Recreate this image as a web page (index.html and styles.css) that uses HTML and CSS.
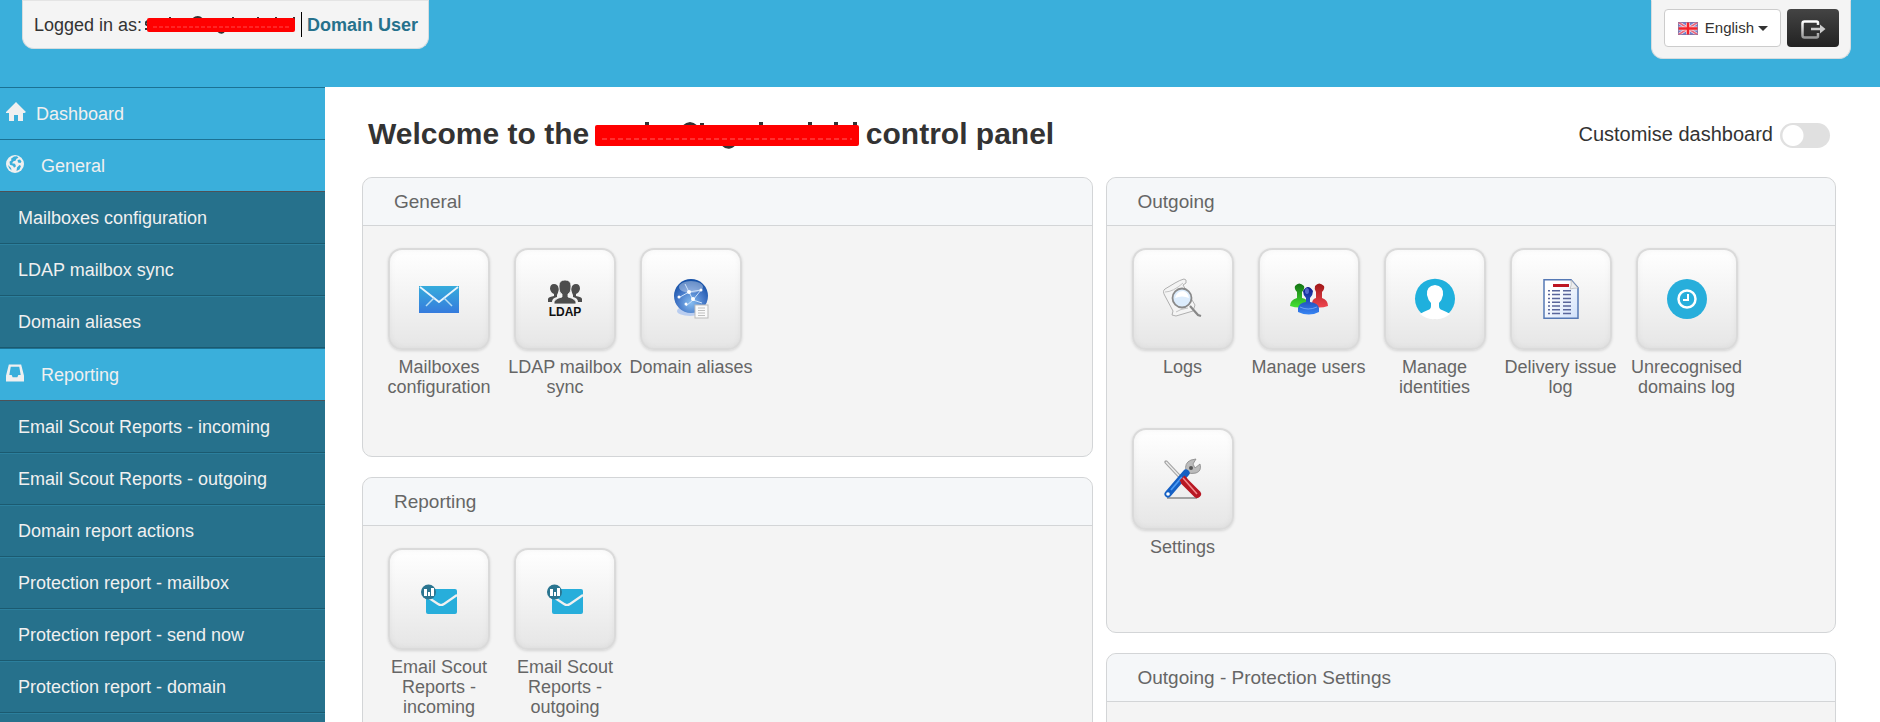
FILE: index.html
```html
<!DOCTYPE html>
<html lang="en">
<head>
<meta charset="utf-8">
<title>Domain control panel</title>
<link rel="stylesheet" href="styles.css">
</head>
<body>
<header class="topbar">
  <div class="tab user-tab">
    <span>Logged in as:</span>
    <svg class="mask-small" width="152" height="20" viewBox="0 0 152 20" role="img" aria-label="Hidden user name">
      <g fill="none" stroke="#333" stroke-width="2"><path d="M5 7c-4-2-6 2-3 3s4 4 0 4H0M25 2v4M48 4q5-4 9 0M62 3v3M88 2v4M113 2v4M131 2v4M149 2v4M73 16q4 4 7-1"/></g>
      <rect x="2" y="3" width="148" height="14" rx="2" fill="#f00"/>
      <path d="M8 12h138" stroke="#ff6a6a" stroke-dasharray="4 2" opacity=".7"/>
    </svg>
    <span class="separator"></span>
    <a class="role" href="#">Domain User</a>
  </div>
  <div class="tab tools-tab">
    <button class="language" type="button">
      <svg width="20" height="13" viewBox="0 0 20 13"><rect width="20" height="13" fill="#6c83d0"/><path d="M0 0l20 13M20 0L0 13" stroke="#f5dfe4" stroke-width="3"/><path d="M0 0l20 13M20 0L0 13" stroke="#e8637a" stroke-width="1.500"/><path d="M10 0v13M0 6.500h20" stroke="#fbd5d5" stroke-width="4"/><path d="M10 0v13M0 6.500h20" stroke="#f3232b" stroke-width="2.500"/><rect x=".5" y=".5" width="19" height="12" fill="none" stroke="#8d6d9c" opacity=".7"/></svg>
      <span>English</span>
      <svg class="caret" width="10" height="5" viewBox="0 0 10 5"><path d="M0 0h10L5 5z" fill="#333"/></svg>
    </button>
    <button class="logout" type="button" aria-label="Log out">
      <svg width="25" height="19" viewBox="0 0 25 19"><defs><linearGradient id="lg" x2="0" y2="1"><stop stop-color="#fff"/><stop offset="1" stop-color="#999"/></linearGradient></defs><path d="M17 5V3q0-1.500-1.500-1.500H3.500Q1.500 1.500 1.500 3.500v12q0 2 2 2h12q1.500 0 1.500-1.500v-3" fill="none" stroke="url(#lg)" stroke-width="2.500"/><path d="M10 7.700h9V4.500L24.500 9 19 13.500v-3.200h-9z" fill="#ccc"/></svg>
    </button>
  </div>
</header>
<div class="layout">
  <nav class="sidebar">
    <a class="head first" href="#"><svg width="20" height="19" viewBox="0 0 20 19"><path d="M10 0l10 10-1.500 1H17v8h-5v-6H8v6H3v-8H0L0 10z" fill="#f0f0f0"/></svg><span>Dashboard</span></a>
    <a class="head group" href="#"><svg width="18" height="18" viewBox="0 0 18 18"><circle cx="9" cy="9" r="9" fill="#f0f0f0"/><path d="M8 1.500l3-.3 1.500 1.500-2 1-1 2-2 .5-1.500 2 3 .5 1 2.500-2 1.500-1-2-3-1-.5-3 2-1.500-.5-1.500zM11.500 5l2.500-.5 1.500 2-1 1.500-2.500-.5zM13.500 10l1.500 1-1.500 3.500-3 1.500.5-3.500zM2 10l3 3 .5 2.500Q2.500 13.500 2 10z" fill="#3aafdb"/></svg><span>General</span></a>
    <a class="item" href="#">Mailboxes configuration</a>
    <a class="item" href="#">LDAP mailbox sync</a>
    <a class="item" href="#">Domain aliases</a>
    <a class="head group" href="#"><svg width="18" height="18" viewBox="0 0 19 18"><path fill-rule="evenodd" d="M3 0h13l3 12v6H0v-6zM5 2.500L3.500 11H6l1 2.500h5L13 11h2.500L14 2.500z" fill="#f0f0f0"/></svg><span>Reporting</span></a>
    <a class="item" href="#">Email Scout Reports - incoming</a>
    <a class="item" href="#">Email Scout Reports - outgoing</a>
    <a class="item" href="#">Domain report actions</a>
    <a class="item" href="#">Protection report - mailbox</a>
    <a class="item" href="#">Protection report - send now</a>
    <a class="item" href="#">Protection report - domain</a>
    <a class="item" href="#" aria-label="More"></a>
  </nav>
  <main class="content">
    <div class="title-row">
      <h1>Welcome to the
        <svg class="mask-large" width="264" height="30" viewBox="0 0 264 30" role="img" aria-label="Hidden name">
          <path d="M52 1v6M89 6q6-6 12 0M107 2v5M166 1v6M215 1v6M241 1v6M260 1v6M128 23q6 6 12-1" fill="none" stroke="#333" stroke-width="4"/>
          <rect y="4" width="264" height="21" rx="2" fill="#f00"/><path d="M7 18h250" stroke="#ff6060" stroke-dasharray="5 3"/>
        </svg>
        control panel</h1>
      <label class="customise"><span>Customise dashboard</span><input type="checkbox" class="toggle"></label>
    </div>
    <div class="columns">
      <div class="column">
        <section class="panel">
          <h2>General</h2>
          <div class="tiles">
            <a class="tile" href="#"><span class="icon"><svg width="40" height="27" viewBox="0 0 40 27"><defs><linearGradient id="mail" x2="0" y2="1"><stop stop-color="#36acdc"/><stop offset="1" stop-color="#367bdd"/></linearGradient></defs><rect width="40" height="27" fill="url(#mail)"/><path d="M1 1l19 15L39 1" fill="none" stroke="#e9f5fc" stroke-width="1.800"/><path d="M7 20l8-8M25 12l8 8" fill="none" stroke="#b5ddf5" stroke-width="1.500"/></svg></span><span>Mailboxes configuration</span></a>
            <a class="tile" href="#"><span class="icon"><svg width="38" height="38" viewBox="0 0 38 38"><g fill="#4d4d4d"><path d="M2 20q-1-3 6-4v-2Q5 13 4 9q0-5 4-5t5 5q-1 4-2 6v2q-5 1-5 5H2z"/><path d="M36 20q1-3-6-4v-2q3-1 4-5 0-5-4-5t-5 5q1 4 2 6v2q5 1 5 5h4z"/><path d="M8 24q-1-5 8-7v-3q-3-1-3-8 0-6 6-6t6 6q0 7-3 8v3q9 2 8 7z" stroke="#f7f7f7" stroke-width=".8"/></g><text x="19" y="36" text-anchor="middle" class="ldap">LDAP</text></svg></span><span>LDAP mailbox sync</span></a>
            <a class="tile" href="#"><span class="icon"><svg width="36" height="40" viewBox="0 0 36 40"><defs><radialGradient id="globe" cx=".5" cy=".7" r=".65"><stop stop-color="#87bdf0"/><stop offset=".6" stop-color="#4679c8"/><stop offset="1" stop-color="#1852a8"/></radialGradient></defs><ellipse cx="17" cy="32" rx="13" ry="5" fill="#b9cdf0"/><circle cx="18" cy="17" r="17" fill="url(#globe)"/><ellipse cx="18" cy="8" rx="12" ry="6" fill="#fff" opacity=".35"/><path d="M7 18l9-5 4 8 8-10M16 13L12 5M20 21l-7 6M16 13l12-2M20 21l9 3" fill="none" stroke="#cde2fa"/><g fill="#fff"><circle cx="16" cy="13" r="2"/><circle cx="20" cy="20" r="2"/><circle cx="28" cy="11" r="1.500"/><circle cx="6" cy="18" r="1.500"/><circle cx="13" cy="25" r="1.500"/></g><rect x="22" y="26" width="13" height="13" fill="#fafafa" stroke="#bbb"/><path d="M25 29h7M25 31.500h7M25 34h7M25 36.500h7" stroke="#c0c0c0"/></svg></span><span>Domain aliases</span></a>
          </div>
        </section>
        <section class="panel">
          <h2>Reporting</h2>
          <div class="tiles">
            <a class="tile" href="#"><span class="icon"><svg width="36" height="30" viewBox="0 0 36 30"><rect x="5" y="5" width="31" height="25" rx="2" fill="#27aedb"/><path d="M8 14l9 6q3 2 6 0l13-9" fill="none" stroke="#f1f1f1" stroke-width="2.200"/><circle cx="7.500" cy="8" r="7.500" fill="#2b7590"/><path d="M3 5h3v7H3zM7 8h2v4H7zM10 4h3v8h-3z" fill="#fff"/></svg></span><span>Email Scout Reports - incoming</span></a>
            <a class="tile" href="#"><span class="icon"><svg width="36" height="30" viewBox="0 0 36 30"><rect x="5" y="5" width="31" height="25" rx="2" fill="#27aedb"/><path d="M8 14l9 6q3 2 6 0l13-9" fill="none" stroke="#f1f1f1" stroke-width="2.200"/><circle cx="7.500" cy="8" r="7.500" fill="#2b7590"/><path d="M3 5h3v7H3zM7 8h2v4H7zM10 4h3v8h-3z" fill="#fff"/></svg></span><span>Email Scout Reports - outgoing</span></a>
          </div>
        </section>
      </div>
      <div class="column">
        <section class="panel">
          <h2>Outgoing</h2>
          <div class="tiles">
            <a class="tile" href="#"><span class="icon"><svg width="40" height="40" viewBox="0 0 40 40"><path d="M2 10q5-3 10-6t9-4q3 0 2 4l-3 2 12 20-2 6-17 5-4-1 1-4L2 17q-3-5 0-7z" fill="#f4f4f4" stroke="#b0b0b0"/><path d="M2 13q8 0 18-9M13 33q4-3 12-4" fill="none" stroke="#c4c4c4"/><path d="M27 27l8 9 3 1" fill="none" stroke="#888" stroke-width="2.200"/><circle cx="19" cy="19" r="9.500" fill="#dcecfc" stroke="#8a8a8a" stroke-width="1.800"/><path d="M12 19q2-7 8-7 5 1 6 7-7-3-14 0z" fill="#fff"/></svg></span><span>Logs</span></a>
            <a class="tile" href="#"><span class="icon"><svg width="40" height="32" viewBox="0 0 40 32"><defs><linearGradient id="g" x2="0" y2="1"><stop stop-color="#137213"/><stop offset="1" stop-color="#45e334"/></linearGradient><linearGradient id="r" x2="0" y2="1"><stop stop-color="#a01717"/><stop offset="1" stop-color="#ef4650"/></linearGradient><linearGradient id="b" x2="0" y2="1"><stop stop-color="#101a87"/><stop offset="1" stop-color="#3685f4"/></linearGradient></defs><path d="M8 9Q5 6 6 3q4-5 9 0 1 3-2 6v6q6 1 6 6v2q-8 3-18 0 0-6 7-8z" fill="url(#g)"/><path d="M27 9q-2-3-1-6 4-5 9 0 1 3-2 6v6q6 2 6 8-9 3-16 0v-2q0-5 4-6z" fill="url(#r)"/><path d="M17 15q-3-3-3-7 5-8 10 0 0 4-3 7v4q8 1 9 6v4q-10 5-21 0v-4q1-5 8-6z" fill="url(#b)"/><path d="M11 24q8 4 17 0" fill="none" stroke="#9ac3ff" opacity=".6"/><ellipse cx="18" cy="8" rx="2" ry="3" fill="#8ea6ff" opacity=".5"/></svg></span><span>Manage users</span></a>
            <a class="tile" href="#"><span class="icon"><svg width="40" height="40" viewBox="0 0 40 40"><path d="M6 34A20 20 0 1 1 34 34z" fill="#1fb0dd"/><path d="M5 35q3-2 8-4 3-1 3-4v-3q-3-3-4-8-1-9 8-10 9 1 8 10-1 5-4 8v3q0 3 3 4 5 2 8 4-7 6-15 5-8 1-15-5z" fill="#fff"/></svg></span><span>Manage identities</span></a>
            <a class="tile" href="#"><span class="icon"><svg width="36" height="40" viewBox="0 0 36 40"><defs><linearGradient id="sheet" x2="1" y2="1"><stop offset=".3" stop-color="#fff"/><stop offset="1" stop-color="#cfe0fa"/></linearGradient></defs><path d="M1 .8h27l7 8v30.500H1z" fill="url(#sheet)" stroke="#5679b5" stroke-width="1.500"/><path d="M28 1q1 5-1 9 4-1 8-1z" fill="#eee" stroke="#aaa" stroke-width=".6"/><path d="M10 6.500h16" stroke="#bd1622" stroke-width="3"/><path d="M5 11.800h2M5 15.600h2M5 19.400h2M5 23.200h2M5 27h2M5 30.800h2M5 34.600h2M9 11.800h8M9 15.600h8M9 19.400h8M9 23.200h8M9 27h8M9 30.800h8M9 34.600h8M20 11.800h8M20 15.600h8M20 19.400h8M20 23.200h8M20 27h8M20 30.800h8M20 34.600h8" stroke="#5a669b" stroke-width="1.500"/></svg></span><span>Delivery issue log</span></a>
            <a class="tile" href="#"><span class="icon"><svg width="40" height="40" viewBox="0 0 40 40"><circle cx="20" cy="20" r="20" fill="#27aedb"/><circle cx="20" cy="20" r="8.500" fill="none" stroke="#fff" stroke-width="2.500"/><path d="M21 15v6h-5" fill="none" stroke="#fff" stroke-width="2"/></svg></span><span>Unrecognised domains log</span></a>
            <a class="tile" href="#"><span class="icon"><svg width="40" height="40" viewBox="0 0 40 40"><path d="M4 39h30" stroke="#888" stroke-width="1.500"/><path d="M3 3l16 17" stroke="#a5a5a5" stroke-width="3.500" stroke-linecap="round"/><path d="M3 3l16 17" stroke="#eee" stroke-width="1.300"/><path d="M22 16l4-4" stroke="#777" stroke-width="5"/><path d="M23 12q-2-8 5-11l5-1-3 5 2 4 5-4q2 7-4 9-5 2-10-2z" fill="#bbb" stroke="#888" stroke-width=".8"/><circle cx="28" cy="9" r="2" fill="#555"/><path d="M23 14L5 35" stroke="#1560c4" stroke-width="7" stroke-linecap="round"/><path d="M19 18L8 31" stroke="#4d9cf5" stroke-width="1.800"/><circle cx="5" cy="35" r="1.800" fill="#fff"/><path d="M19 19l3 3" stroke="#b81824" stroke-width="7"/><path d="M22 23l12 12" stroke="#b81824" stroke-width="8" stroke-linecap="round"/><path d="M20 19l14 16" stroke="#f38b8e" stroke-width="1.500"/></svg></span><span>Settings</span></a>
          </div>
        </section>
        <section class="panel">
          <h2>Outgoing - Protection Settings</h2>
          <div class="tiles"></div>
        </section>
      </div>
    </div>
  </main>
</div>
</body>
</html>
```
FILE: styles.css
```css
* { box-sizing: border-box; }
html, body { height: 100%; }
body {
  margin: 0;
  overflow: hidden;
  display: flex;
  flex-direction: column;
  background: #fff;
  color: #333;
  font: 18px/20px "Liberation Sans", Arial, sans-serif;
}
a { color: inherit; text-decoration: none; }
button { font: inherit; color: inherit; cursor: pointer; }

.topbar {
  flex: none;
  display: flex;
  justify-content: space-between;
  align-items: flex-start;
  min-height: 87px;
  padding: 0 29px 0 22px;
  background: #3aafdb;
}
.tab {
  display: flex;
  background: #f4f4f4;
  border: 1px solid #d5dcdf;
  border-top-color: #e4e4e4;
  border-radius: 0 0 12px 12px;
}
.user-tab { align-items: center; padding: 11px 10px 11px 11px; }
.mask-small { margin-left: 3px; }
.separator { width: 1px; height: 25px; margin: 0 5px 0 4px; background: #000; }
.role { color: #26718c; font-weight: bold; }
.tools-tab { gap: 6px; padding: 8px 11px 11px 12px; border-top-color: #f4f4f4; }
.language {
  display: flex;
  align-items: center;
  height: 38px;
  padding: 0 12px 0 13px;
  border: 1px solid #ccc;
  border-radius: 4px;
  background: #fff;
  font-size: 15px;
}
.language span { margin: 0 4px 0 7px; }
.logout {
  display: flex;
  align-items: center;
  height: 38px;
  padding: 2px 13px 0 14px;
  border: 0;
  border-radius: 4px;
  background: linear-gradient(#444, #222);
}

.layout { flex: 1; min-height: 0; display: flex; align-items: stretch; }
.sidebar { flex: none; width: 325px; background: #26718c; color: #f0f0f0; }
.head, .item { display: flex; align-items: center; height: 52px; }
.head { padding-left: 6px; background: #3aafdb; border-top: 1px solid #1b7294; }
.head.first svg { margin-bottom: 4px; }
.head.first span { margin-left: 10px; }
.group { height: 53px; border-bottom: 1px solid #4d5258; }
.group svg { margin-bottom: 4px; }
.group span { margin-left: 17px; }
.item { padding: 0 18px; border-bottom: 1px solid #1b5a70; box-shadow: inset 0 1px #2b7f9d; }
.group + .item { box-shadow: none; }

.content { flex: 1; padding: 29px 44px 0 37px; }
.title-row {
  display: flex;
  justify-content: space-between;
  align-items: center;
  padding: 0 6px;
  margin-bottom: 25px;
}
h1 { margin: 0; font-size: 30px; line-height: 36px; }
.mask-large { vertical-align: -7px; margin: 0 -2px; }
.customise { display: flex; align-items: center; gap: 7px; font-size: 20px; }
.toggle {
  appearance: none;
  width: 50px;
  height: 25px;
  margin: 3px 0 0;
  border-radius: 13px;
  background: radial-gradient(circle at 13px 50%, #fff 10px, #e0e0e0 11px);
}

.columns { display: grid; grid-template-columns: 1fr 1fr; gap: 13px; align-items: start; }
.column { display: grid; gap: 20px; }
.panel { border: 1px solid #d3d5d7; border-radius: 10px; background: #f4f4f4; }
h2 {
  margin: 0;
  padding: 14px 31px 13px;
  border-bottom: 1px solid #d3d5d7;
  border-radius: 10px 10px 0 0;
  background: #f5f7f9;
  color: #666;
  font-size: 19px;
  font-weight: normal;
  line-height: 20px;
}
.tiles {
  display: flex;
  flex-wrap: wrap;
  align-content: flex-start;
  min-height: 230px;
  padding: 22px 13px 24px;
}
.tile {
  display: flex;
  flex-direction: column;
  align-items: center;
  gap: 7px;
  width: 126px;
  min-height: 180px;
  color: #666;
  text-align: center;
}
.icon {
  display: grid;
  place-items: center;
  width: 102px;
  height: 102px;
  border: 2px solid #dadada;
  border-radius: 14px;
  background: linear-gradient(#fff, #e6e6e6);
  box-shadow: 0 1px 3px #0002, inset 0 0 6px #0000000d;
}
.icon svg { overflow: visible; }
.ldap { font: bold 12px "Liberation Sans", Arial, sans-serif; fill: #111; }
```
